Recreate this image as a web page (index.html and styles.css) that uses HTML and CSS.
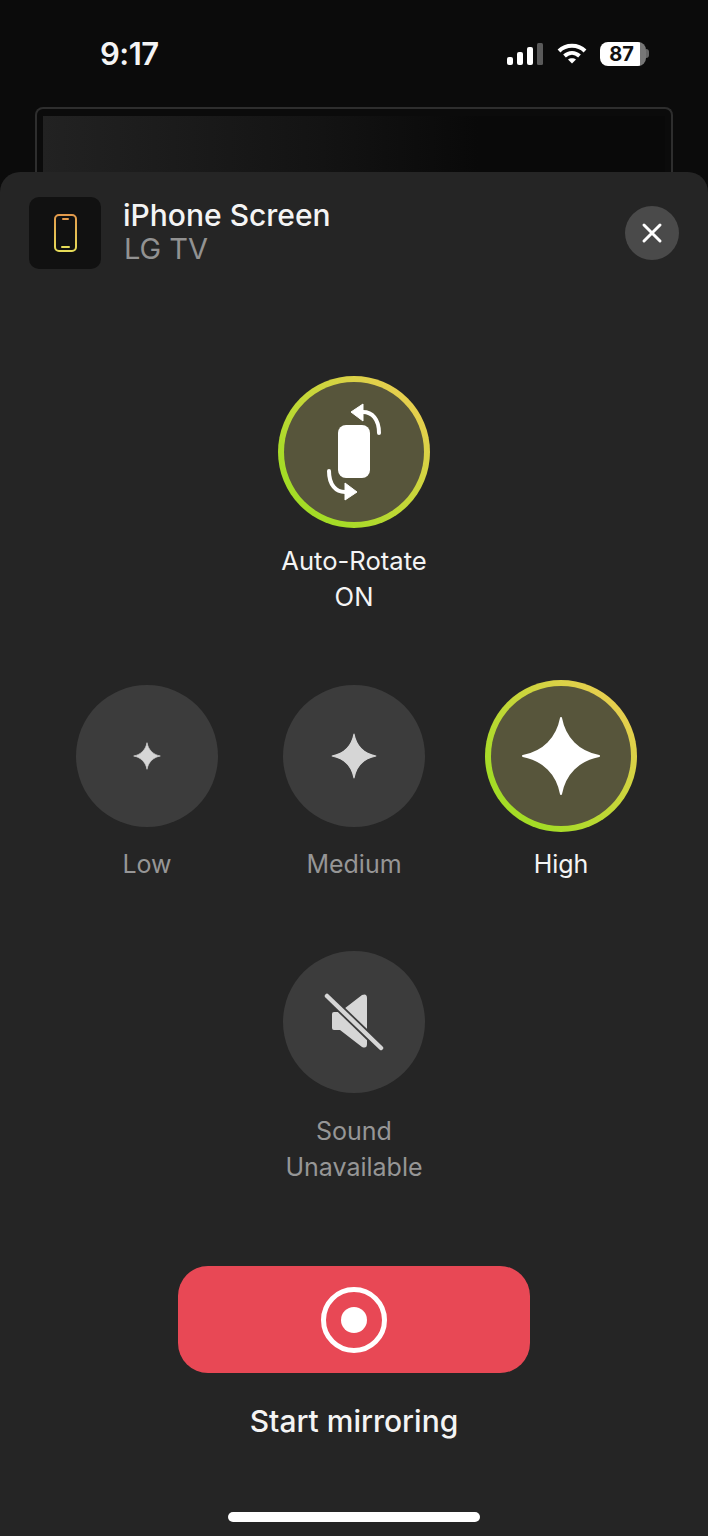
FILE: index.html
```html
<!DOCTYPE html>
<html lang="en">
<head>
  <meta charset="UTF-8" />
  <meta name="viewport" content="width=device-width, initial-scale=1.0" />
  <title>Screen mirroring</title>
  <link rel="stylesheet" href="styles.css">
</head>
<body>
  <div class="status">
    <span class="time">9:17</span>
    <div class="status-icons">
      <svg class="signal" width="36" height="22" viewBox="0 0 36 22">
        <rect x="0" y="14" width="6" height="8" rx="2" fill="#fff"/>
        <rect x="10" y="9" width="6" height="13" rx="2" fill="#fff"/>
        <rect x="20" y="4" width="6" height="18" rx="2" fill="#fff"/>
        <rect x="30" y="0" width="6" height="22" rx="1.5" fill="#5a5a5a"/>
      </svg>
      <svg class="wifi" width="30" height="21" viewBox="0 0 30 21" fill="none" stroke="#fff" stroke-width="4">
        <path d="M2 8 C9 1 21 1 28 8"/>
        <path d="M7.5 13 C12 9 18 9 22.5 13"/>
        <path d="M15 20.5 L11 16.5 C13 14.8 17 14.8 19 16.5 Z" fill="#fff" stroke="none"/>
      </svg>
      <div class="battery"><span class="battery-level">87</span></div>
      <span class="battery-nub"></span>
    </div>
  </div>

  <div class="tv-frame"><div class="tv-screen"></div></div>

  <div class="sheet">
    <div class="sheet-head">
      <div class="source-icon">
        <svg width="25" height="40" viewBox="0 0 25 40" fill="none">
          <defs>
            <linearGradient id="phoneGrad" x1="0" y1="0" x2="0" y2="1">
              <stop offset="0" stop-color="#e39a4c"/>
              <stop offset="1" stop-color="#e6dc58"/>
            </linearGradient>
          </defs>
          <rect x="2" y="2" width="21" height="36" rx="4" stroke="url(#phoneGrad)" stroke-width="2"/>
          <rect x="9" y="5" width="7" height="2" rx="1" fill="#e39a4c"/>
          <rect x="8" y="33" width="9" height="2" rx="1" fill="#e6dc58"/>
        </svg>
      </div>
      <div class="source-text">
        <div class="source-title">iPhone Screen</div>
        <div class="source-sub">LG TV</div>
      </div>
      <button class="close-btn">
        <svg width="22" height="22" viewBox="0 0 22 22" stroke="#fff" stroke-width="3" stroke-linecap="round">
          <path d="M3 3 L19 19 M19 3 L3 19"/>
        </svg>
      </button>
    </div>

    <div class="ctl ctl-rotate">
      <div class="ctl-slot">
        <div class="circle circle-on">
          <svg width="64" height="100" viewBox="0 0 64 100" fill="none">
            <rect x="16" y="23" width="32" height="53" rx="8" fill="#fff"/>
            <path d="M41 10 C50 10 57 17 57 31" stroke="#fff" stroke-width="4" stroke-linecap="round"/>
            <path d="M29 10 L41 2 L41 19 Z" fill="#fff" stroke="#fff" stroke-linejoin="round"/>
            <path d="M23 90 C14 90 7 83 7 69" stroke="#fff" stroke-width="4" stroke-linecap="round"/>
            <path d="M35 90 L23 98 L23 81 Z" fill="#fff" stroke="#fff" stroke-linejoin="round"/>
          </svg>
        </div>
      </div>
      <div class="ctl-label label-on">Auto-Rotate<br>ON</div>
    </div>

    <div class="quality-row">
      <div class="ctl">
        <div class="ctl-slot">
          <div class="circle">
            <svg class="sparkle" width="28" height="28" viewBox="-41 -41 82 82"><path d="M0 -39 C4 -18 18 -4 39 0 C18 4 4 18 0 39 C-4 18 -18 4 -39 0 C-18 -4 -4 -18 0 -39 Z"/></svg>
          </div>
        </div>
        <div class="ctl-label">Low</div>
      </div>
      <div class="ctl">
        <div class="ctl-slot">
          <div class="circle">
            <svg class="sparkle" width="46" height="46" viewBox="-41 -41 82 82"><path d="M0 -39 C4 -18 18 -4 39 0 C18 4 4 18 0 39 C-4 18 -18 4 -39 0 C-18 -4 -4 -18 0 -39 Z"/></svg>
          </div>
        </div>
        <div class="ctl-label">Medium</div>
      </div>
      <div class="ctl">
        <div class="ctl-slot">
          <div class="circle circle-on">
            <svg class="sparkle sparkle-on" width="80" height="80" viewBox="-41 -41 82 82"><path d="M0 -39 C4 -18 18 -4 39 0 C18 4 4 18 0 39 C-4 18 -18 4 -39 0 C-18 -4 -4 -18 0 -39 Z"/></svg>
          </div>
        </div>
        <div class="ctl-label label-on">High</div>
      </div>
    </div>

    <div class="ctl ctl-sound">
      <div class="ctl-slot">
        <div class="circle">
          <svg width="60" height="60" viewBox="0 0 60 60" fill="none">
            <path d="M8 22 Q8 20 10 20 L16 20 L38 3 Q43 1 43 6 L43 52 Q43 57 38 55 L16 38 L10 38 Q8 38 8 36 Z" fill="#d6d6d6"/>
            <path d="M2 3 L58 57" stroke="#3c3c3c" stroke-width="8"/>
            <path d="M3 4 L57 56" stroke="#d6d6d6" stroke-width="4.5" stroke-linecap="round"/>
          </svg>
        </div>
      </div>
      <div class="ctl-label">Sound<br>Unavailable</div>
    </div>

    <button class="start-btn"><span class="rec-ring"><span class="rec-dot"></span></span></button>
    <div class="start-label">Start mirroring</div>
    <div class="home-bar"></div>
  </div>
</body>
</html>
```

FILE: styles.css
```css
body {
  margin: 0;
  width: 708px;
  height: 1536px;
  overflow: hidden;
  background: #0b0b0b;
  color: #f4f4f4;
  font-family: Inter, "Liberation Sans", sans-serif;
}

.status {
  display: flex;
  align-items: center;
  height: 107px;
  padding: 0 59px 0 100px;
  box-sizing: border-box;
}

.time {
  font-size: 31px;
  font-weight: 600;
  letter-spacing: -0.5px;
}

.status-icons {
  display: flex;
  align-items: center;
  margin-left: auto;
}

.wifi {
  margin-left: 14px;
}

.battery {
  width: 46px;
  height: 24px;
  margin-left: 13px;
  border-radius: 8px;
  background: linear-gradient(90deg, #fff 86%, #777 86%);
  display: flex;
  align-items: center;
  justify-content: center;
}

.battery-level {
  color: #111;
  font-size: 20px;
  font-weight: 700;
  margin-right: 3px;
}

.battery-nub {
  width: 3px;
  height: 9px;
  background: #666;
  border-radius: 0 3px 3px 0;
}

.tv-frame {
  height: 65px;
  margin: 0 35px;
  box-sizing: border-box;
  padding: 7px 6px 0;
  border: 2px solid #2e2e2e;
  border-bottom: 0;
  border-radius: 8px 8px 0 0;
}

.tv-screen {
  height: 100%;
  background: linear-gradient(90deg, #222, #131313 45%, #090909 70%);
}

.sheet {
  position: relative;
  height: 1364px;
  display: flex;
  flex-direction: column;
  align-items: center;
  background: #252525;
  border-radius: 20px 20px 0 0;
}

.sheet-head {
  display: flex;
  align-items: center;
  align-self: stretch;
  margin-top: 25px;
  padding: 0 29px;
}

.source-icon {
  width: 72px;
  height: 72px;
  border-radius: 10px;
  background: #111;
  display: flex;
  align-items: center;
  justify-content: center;
}

.source-text {
  margin-left: 22px;
  font-size: 29px;
  line-height: 34px;
}

.source-title {
  font-size: 30px;
  font-weight: 500;
  margin-top: -2px;
}

.source-sub {
  color: #929292;
  margin-left: 1px;
}

.close-btn {
  width: 54px;
  height: 54px;
  margin-left: auto;
  margin-right: 0;
  padding: 0;
  border: 0;
  border-radius: 50%;
  background: #4a4a4a;
  display: flex;
  align-items: center;
  justify-content: center;
}

.ctl {
  width: 207px;
  display: flex;
  flex-direction: column;
  align-items: center;
}

.ctl-rotate {
  margin-top: 107px;
}

.ctl-sound {
  margin-top: 64px;
}

.ctl-slot {
  height: 152px;
  display: flex;
  align-items: center;
}

.circle {
  width: 142px;
  height: 142px;
  border-radius: 50%;
  background: #3c3c3c;
  display: flex;
  align-items: center;
  justify-content: center;
}

.circle-on {
  width: 152px;
  height: 152px;
  box-sizing: border-box;
  border: 6px solid transparent;
  background:
    linear-gradient(#57553b, #57553b) padding-box,
    linear-gradient(45deg, #a4dc26 20%, #c8d63a 55%, #e6cf4e 85%) border-box;
}

.ctl-label {
  margin-top: 14px;
  color: #969696;
  font-size: 25px;
  line-height: 36px;
  text-align: center;
}

.ctl-rotate .ctl-label,
.ctl-sound .ctl-label {
  margin-top: 15px;
}

.ctl-rotate .ctl-label {
  font-size: 25.6px;
}

.label-on {
  color: #f4f4f4;
}

.quality-row {
  display: flex;
  margin-top: 65px;
}

.sparkle path {
  fill: #d6d6d6;
  stroke: #d6d6d6;
  stroke-width: 2;
  stroke-linejoin: round;
}

.sparkle-on path {
  fill: #fff;
  stroke: #fff;
}

.start-btn {
  width: 352px;
  height: 107px;
  margin-top: 81px;
  padding: 0;
  border: 0;
  border-radius: 30px;
  background: #e84855;
  display: flex;
  align-items: center;
  justify-content: center;
}

.rec-ring {
  width: 66px;
  height: 66px;
  box-sizing: border-box;
  border: 5px solid #fff;
  border-radius: 50%;
  display: flex;
  align-items: center;
  justify-content: center;
}

.rec-dot {
  width: 26px;
  height: 26px;
  border-radius: 50%;
  background: #fff;
}

.start-label {
  margin-top: 28px;
  font-size: 30px;
  line-height: 40px;
  font-weight: 500;
}

.home-bar {
  width: 252px;
  height: 10px;
  margin-top: 71px;
  border-radius: 5px;
  background: #fff;
}
```
